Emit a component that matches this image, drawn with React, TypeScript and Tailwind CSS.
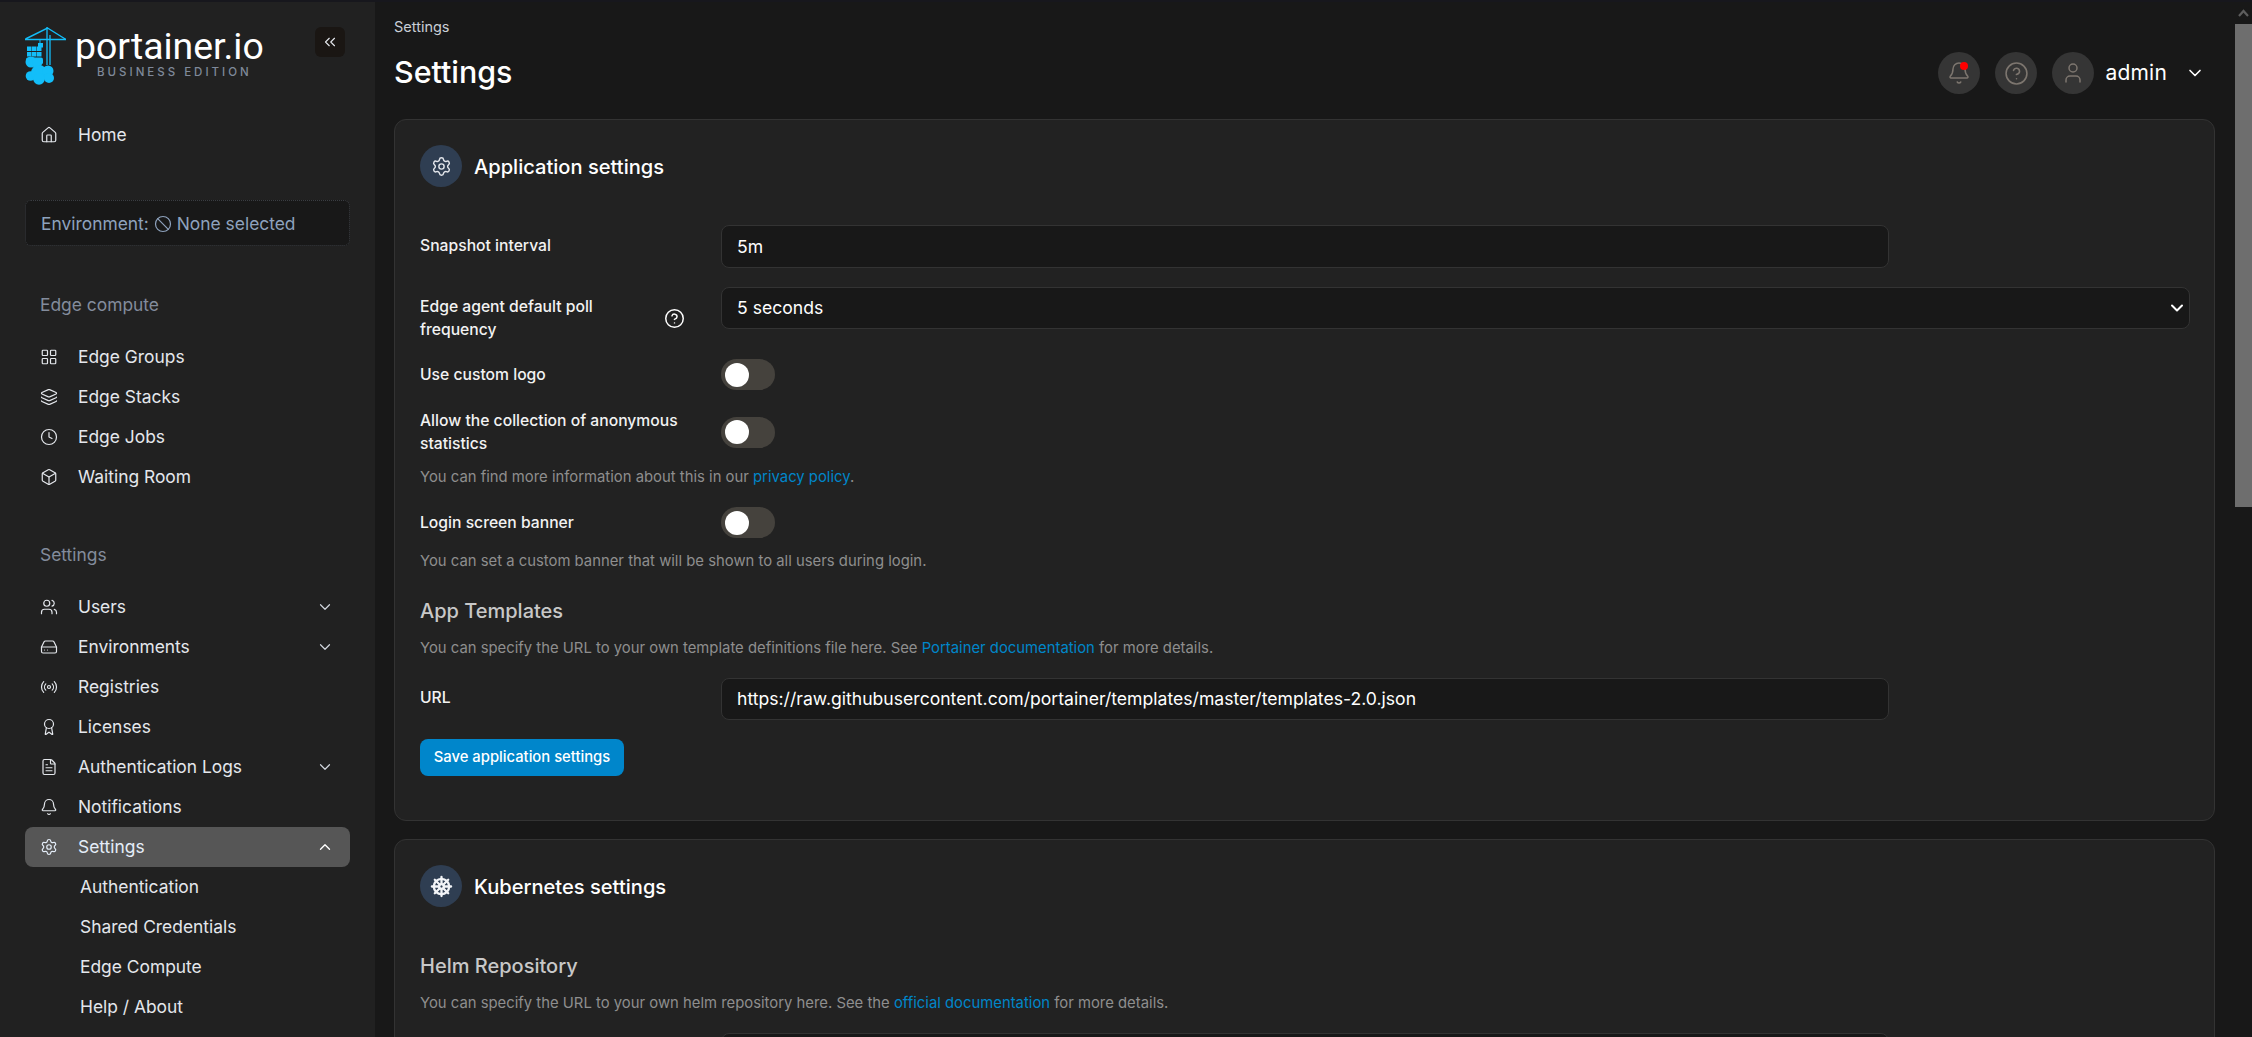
import {
  Award,
  Ban,
  Bell,
  Box,
  ChevronDown,
  ChevronUp,
  ChevronsLeft,
  CircleHelp,
  Clock,
  FileText,
  HardDrive,
  House,
  Layers,
  LayoutGrid,
  Radio,
  Settings,
  ShipWheel,
  User,
  Users,
} from 'lucide-react';
import type { ReactNode } from 'react';

const font = "font-['Inter','Liberation_Sans',sans-serif]";

function Logo() {
  return (
    <div className="flex">
      <svg width="41" height="58" viewBox="0 0 41 58" fill="#13bef9" className="shrink-0">
        <g fill="none" stroke="#13bef9">
          <path d="M0 12.5H41" strokeWidth="1.6" />
          <path d="M0.5 12 22.5 1 41 12.5" strokeWidth="1.4" />
          <path d="M22 0V38M25 8V38" strokeWidth="1.3" />
          <path d="M15 12V16" strokeWidth="1" />
        </g>
        <rect x="13" y="16" width="5" height="4.5" />
        <rect x="2" y="19.5" width="4.5" height="4.5" />
        <rect x="7" y="19.5" width="4.5" height="4.5" />
        <rect x="12" y="19.5" width="4.5" height="4.5" />
        <rect x="2" y="25" width="4.5" height="4.5" />
        <rect x="7" y="25" width="4.5" height="4.5" />
        <rect x="12" y="25" width="4.5" height="4.5" />
        <circle cx="6" cy="35" r="5.5" />
        <rect x="1" y="30.5" width="17" height="7" rx="2" />
        <circle cx="12" cy="36" r="5" />
        <circle cx="5.5" cy="49" r="4.8" />
        <circle cx="14" cy="46" r="8" />
        <circle cx="23" cy="44" r="5.5" />
        <circle cx="24" cy="51" r="5" />
        <circle cx="14" cy="52" r="5.8" />
      </svg>
      <div className="ml-[9px] flex flex-col">
        <div className="mt-[1px] font-['Roboto',sans-serif] text-[37.4px] leading-[36px] text-white">
          portainer.io
        </div>
        <div className="ml-[22px] mt-[1px] text-[11.5px] font-medium leading-[14px] tracking-[3px] text-[#7f899a]">
          BUSINESS EDITION
        </div>
      </div>
    </div>
  );
}

function NavRow({
  icon,
  label,
  arrow,
  active,
}: {
  icon: ReactNode;
  label: string;
  arrow?: 'down' | 'up';
  active?: boolean;
}) {
  return (
    <div
      className={`flex h-[40px] items-center rounded-lg pl-[15px] pr-[16px] text-[17.4px] ${
        active ? 'bg-[#565656] text-[#e4edf8]' : 'text-[#e4e7ec]'
      }`}
    >
      <span className="flex w-[18px] shrink-0 justify-center">{icon}</span>
      <span className="ml-[20px] flex-1">{label}</span>
      {arrow === 'down' && <ChevronDown size={18} strokeWidth={1.6} className="text-[#d0d5dd]" />}
      {arrow === 'up' && <ChevronUp size={18} strokeWidth={1.8} className="text-white" />}
    </div>
  );
}

function SubRow({ label }: { label: string }) {
  return <div className="flex h-[40px] items-center pl-[55px] text-[17.4px] text-[#e4e7ec]">{label}</div>;
}

function Sidebar() {
  const ic = { size: 18, strokeWidth: 1.6 };
  return (
    <aside className="w-[375px] shrink-0 bg-[#212121] pt-[25px]">
      <div className="flex h-[58px] items-start justify-between pl-[25px] pr-[30px]">
        <Logo />
        <button className="flex h-[30px] w-[30px] items-center justify-center rounded-md bg-[#1a1613] text-[#e4e7ec]">
          <ChevronsLeft size={18} strokeWidth={1.5} />
        </button>
      </div>
      <nav className="ml-[25px] mt-[30px] w-[325px]">
        <NavRow icon={<House {...ic} />} label="Home" />
        <div className="mt-[45px] flex h-[46px] items-center rounded-md border border-dotted border-[#3a3d42] bg-[#181818] pl-[15px] pt-[2px] text-[17.4px] text-[#8ea2bd]">
          Environment:
          <Ban size={18} strokeWidth={1.6} className="mx-[5px]" />
          None selected
        </div>
        <div className="mt-[47px] pl-[15px] text-[17.4px] leading-[24px] text-[#838c9c]">Edge compute</div>
        <div className="mt-[20px]">
          <NavRow icon={<LayoutGrid {...ic} />} label="Edge Groups" />
          <NavRow icon={<Layers {...ic} />} label="Edge Stacks" />
          <NavRow icon={<Clock {...ic} />} label="Edge Jobs" />
          <NavRow icon={<Box {...ic} />} label="Waiting Room" />
        </div>
        <div className="mt-[46px] pl-[15px] text-[17.4px] leading-[24px] text-[#838c9c]">Settings</div>
        <div className="mt-[20px]">
          <NavRow icon={<Users {...ic} />} label="Users" arrow="down" />
          <NavRow icon={<HardDrive {...ic} />} label="Environments" arrow="down" />
          <NavRow icon={<Radio {...ic} />} label="Registries" />
          <NavRow icon={<Award {...ic} />} label="Licenses" />
          <NavRow icon={<FileText {...ic} />} label="Authentication Logs" arrow="down" />
          <NavRow icon={<Bell {...ic} />} label="Notifications" />
          <NavRow icon={<Settings {...ic} />} label="Settings" arrow="up" active />
          <SubRow label="Authentication" />
          <SubRow label="Shared Credentials" />
          <SubRow label="Edge Compute" />
          <SubRow label="Help / About" />
        </div>
      </nav>
    </aside>
  );
}

function TopButton({ children }: { children: ReactNode }) {
  return (
    <div className="relative flex h-[42px] w-[42px] items-center justify-center rounded-full bg-[#353535] text-[#7d766f]">
      {children}
    </div>
  );
}

function Toggle() {
  return (
    <div className="flex h-[31px] w-[54px] shrink-0 items-center rounded-full bg-[#45423d] pl-[4px]">
      <div className="h-[24px] w-[24px] rounded-full bg-white" />
    </div>
  );
}

function Label({ className, children }: { className?: string; children: ReactNode }) {
  return <div className={`text-[15.7px] font-medium leading-[23px] text-[#f2f2f2] ${className ?? ''}`}>{children}</div>;
}

function Row({ className, children }: { className?: string; children: ReactNode }) {
  return <div className={`flex items-center ${className ?? ''}`}>{children}</div>;
}

function TextInput({ value, className }: { value?: string; className?: string }) {
  return (
    <div
      className={`flex w-[1168px] items-center rounded-lg border border-[#333] bg-[#181818] pl-[15px] text-[17.6px] text-white ${
        className ?? 'h-[42px]'
      }`}
    >
      {value}
    </div>
  );
}

function Help({ className, children }: { className?: string; children: ReactNode }) {
  return <p className={`text-[14.85px] leading-[20px] text-[#8e8e8e] ${className ?? ''}`}>{children}</p>;
}

function Link({ children }: { children: ReactNode }) {
  return <span className="text-[#0086c9]">{children}</span>;
}

function CardTitle({ icon, title }: { icon: ReactNode; title: string }) {
  return (
    <div className="flex h-[42px] items-center">
      <div className="flex h-[42px] w-[42px] items-center justify-center rounded-full bg-[#2f3e52] text-[#e4e7ec]">
        {icon}
      </div>
      <h2 className="ml-[12px] pt-[2px] text-[20.1px] font-medium text-white">{title}</h2>
    </div>
  );
}

function Scrollbar() {
  return (
    <div className="flex w-[17px] shrink-0 flex-col bg-[#181818]">
      <div className="flex h-[22px] items-center justify-center">
        <svg width="11" height="8" viewBox="0 0 11 8" fill="none" stroke="#5d5d5d" strokeWidth="2.200">
          <path d="M1 7 5.500 2 10 7" />
        </svg>
      </div>
      <div className="h-[483px] bg-[#6e6e6e]" />
    </div>
  );
}

export default function App() {
  return (
    <div className={`flex h-[1037px] w-[2252px] overflow-hidden border-t-2 border-[#17171d] bg-[#181818] ${font}`}>
      <Sidebar />
      <main className="min-w-0 flex-1 overflow-hidden pl-[19px] pr-[20px] pt-[15px]">
        <div className="text-[14.5px] leading-[20px] text-[#c9ced6]">Settings</div>
        <div className="mt-[15px] flex h-[42px] items-center justify-between">
          <h1 className="text-[30.4px] font-medium text-white">Settings</h1>
          <div className="flex items-center">
            <TopButton>
              <Bell size={24} strokeWidth={1.5} />
              <span className="absolute right-[12px] top-[10px] h-[8px] w-[8px] rounded-full bg-[#ff0000]" />
            </TopButton>
            <div className="ml-[15px]">
              <TopButton>
                <CircleHelp size={25} strokeWidth={1.5} />
              </TopButton>
            </div>
            <div className="ml-[15px]">
              <TopButton>
                <User size={24} strokeWidth={1.5} />
              </TopButton>
            </div>
            <span className="ml-[11px] text-[21px] tracking-[0.2px] text-white">admin</span>
            <ChevronDown size={20} strokeWidth={2} className="ml-[18px] mr-[10px] text-white" />
          </div>
        </div>

        <section className="mt-[25px] h-[702px] rounded-xl border border-[#333] bg-[#222] pl-[25px] pr-[24px] pt-[25px]">
          <CardTitle icon={<Settings size={21} strokeWidth={1.6} />} title="Application settings" />
          <div className="mt-[38px]">
            <Row className="h-[43px]">
              <Label className="w-[301px] shrink-0 pb-[3px]">Snapshot interval</Label>
              <TextInput value="5m" className="h-[43px] pt-[1px]" />
            </Row>
            <div className="mt-[19px] flex items-start">
              <div className="flex w-[301px] shrink-0 items-center pt-[8px]">
                <Label className="w-[190px]">Edge agent default poll frequency</Label>
                <CircleHelp size={21} strokeWidth={1.7} className="ml-[54px] mt-[1px] text-white" />
              </div>
              <div className="flex h-[42px] flex-1 items-center justify-between rounded-lg border border-[#333] bg-[#181818] pl-[15px] pr-[2px] text-[17.6px] text-white">
                5 seconds
                <ChevronDown size={20} strokeWidth={2.4} />
              </div>
            </div>
            <Row className="mt-[18px] h-[31px]">
              <Label className="w-[301px] shrink-0">Use custom logo</Label>
              <Toggle />
            </Row>
            <Row className="mt-[19px] h-[46px]">
              <Label className="w-[301px] shrink-0 pr-[20px]">Allow the collection of anonymous statistics</Label>
              <Toggle />
            </Row>
            <Help className="mt-[12px]">
              You can find more information about this in our <Link>privacy policy</Link>.
            </Help>
            <Row className="mt-[20px] h-[31px]">
              <Label className="w-[301px] shrink-0">Login screen banner</Label>
              <Toggle />
            </Row>
            <Help className="mt-[13px]">You can set a custom banner that will be shown to all users during login.</Help>
            <h3 className="mt-[26px] text-[20px] font-medium leading-[28px] text-[#c8c8c8]">App Templates</h3>
            <Help className="mt-[13px]">
              You can specify the URL to your own template definitions file here. See <Link>Portainer documentation</Link> for more details.
            </Help>
            <Row className="mt-[20px] h-[42px]">
              <Label className="w-[301px] shrink-0 pb-[3px]">URL</Label>
              <TextInput value="https://raw.githubusercontent.com/portainer/templates/master/templates-2.0.json" />
            </Row>
            <button className="mt-[19px] flex h-[37px] w-[204px] items-center justify-center rounded-lg bg-[#0086cb] text-[14.8px] font-medium text-white">
              Save application settings
            </button>
          </div>
        </section>

        <section className="mt-[18px] rounded-xl border border-[#333] bg-[#222] pl-[25px] pr-[24px] pt-[25px]">
          <CardTitle icon={<ShipWheel size={23} strokeWidth={2.4} className="text-[#f2f4f7]" />} title="Kubernetes settings" />
          <h3 className="mt-[45px] text-[20px] font-medium leading-[28px] text-[#c8c8c8]">Helm Repository</h3>
          <Help className="mt-[13px]">
            You can specify the URL to your own helm repository here. See the <Link>official documentation</Link> for more details.
          </Help>
          <div className="ml-[301px] mt-[20px]">
            <TextInput />
          </div>
        </section>
      </main>
      <Scrollbar />
    </div>
  );
}
